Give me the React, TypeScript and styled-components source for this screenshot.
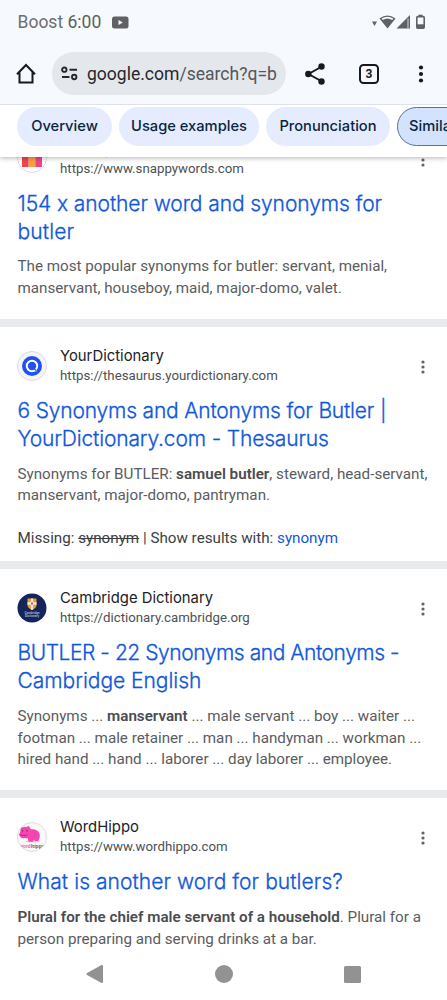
import React from 'react';
import styled, { createGlobalStyle } from 'styled-components';

const GlobalStyle = createGlobalStyle`
  * { box-sizing: border-box; }
  body { margin: 0; background: #fff; font-family: Roboto, "Liberation Sans", sans-serif; }
`;

const display = 'Inter, "Liberation Sans", sans-serif';

const Screen = styled.div`
  display: flex;
  flex-direction: column;
  width: 447px;
  height: 1000px;
  overflow: hidden;
  background: #fff;
`;

const StatusBar = styled.div`
  display: flex;
  align-items: center;
  justify-content: space-between;
  flex: none;
  height: 44px;
  padding: 0 21px 0 17.5px;
  background: #f6f9fe;
`;

const Clock = styled.div`
  display: flex;
  align-items: center;
  gap: 11px;
  color: #6d6f72;
  font-size: 17.5px;
  line-height: 22px;
`;

const Time = styled.span`
  color: #5d5f62;
`;

const Toolbar = styled.div`
  position: relative;
  z-index: 2;
  display: flex;
  align-items: center;
  flex: none;
  height: 61px;
  padding: 0 0 1px 16px;
  background: #f6f9fe;
  border-bottom: 1px solid #dfe2e7;
`;

const AddressBar = styled.div`
  display: flex;
  align-items: center;
  gap: 9px;
  width: 234px;
  height: 43px;
  margin: 0 19px 0 16px;
  padding-left: 9px;
  border-radius: 22px;
  background: #e4e7eb;
  color: #53565a;
  font-size: 17.54px;
  line-height: 24px;
  white-space: nowrap;
`;

const Domain = styled.span`
  color: #25282b;
`;

const Tools = styled.div`
  display: flex;
  align-items: center;
  gap: 33px;
`;

const TabCount = styled.div`
  width: 20px;
  height: 20px;
  margin-right: 3px;
  border: 2px solid #17191c;
  border-radius: 4.5px;
  color: #17191c;
  font-size: 12px;
  font-weight: 700;
  line-height: 16px;
  text-align: center;
`;

const ChipBar = styled.nav`
  position: relative;
  z-index: 1;
  flex: none;
  height: 52px;
  background: #fff;
  box-shadow: 0 1px 5px rgba(0, 0, 0, 0.3);
`;

const ChipScroller = styled.div`
  display: flex;
  gap: 7px;
  height: 52px;
  padding: 2px 0 0 17px;
  overflow: hidden;
`;

const Chip = styled.div<{ $width: number; $selected?: boolean }>`
  flex: none;
  width: ${p => p.$width}px;
  height: 39px;
  padding-left: ${p => (p.$selected ? '11px' : '0')};
  border: 1px solid ${p => (p.$selected ? '#5b7391' : '#e6ecff')};
  border-radius: 20px;
  background: ${p => (p.$selected ? '#d3e3fd' : '#e6ecff')};
  color: #0a2540;
  font: 500 14.7px/37px ${display};
  text-align: ${p => (p.$selected ? 'left' : 'center')};
  white-space: nowrap;
`;

const Viewport = styled.main`
  flex: 1;
  min-height: 0;
  overflow: hidden;
`;

const Results = styled.div`
  margin-top: -37.2px;
`;

const Result = styled.article`
  padding: 19px 17.5px 19.4px;
  border-bottom: 8px solid #e8eaed;
  &:last-child { border-bottom: 0; }
`;

const Source = styled.header`
  display: flex;
  align-items: center;
  height: 39px;
`;

const Favicon = styled.svg`
  flex: none;
  width: 30px;
  height: 30px;
  margin: 0 13px 0 -0.5px;
`;

const SourceText = styled.div`
  flex: 1;
`;

const SiteName = styled.div`
  color: #202124;
  font: 400 14.85px/20px ${display};
`;

const SiteUrl = styled.div`
  color: #4d5156;
  font-size: 13.28px;
  line-height: 19px;
`;

const MenuButton = styled.div`
  display: flex;
  margin: 3px 0.5px 0 0;
`;

const Title = styled.h3`
  margin: 12px 0 10.5px;
  color: #0f57da;
  font: 300 21px/28px ${display};
  -webkit-text-stroke: 0.3px #0f57da;
`;

const TitleLine = styled.span<{ $track: number }>`
  display: block;
  letter-spacing: ${p => p.$track}px;
  white-space: nowrap;
`;

const Snippet = styled.p`
  margin: 0;
  color: #5a5c60;
  font-size: 15.2px;
  line-height: 21.7px;
  white-space: nowrap;
  b { font-weight: 600; color: #4a4c50; }
`;

const Missing = styled(Snippet)`
  margin: 21.2px 0 -8px;
  color: #3c4043;
`;

const Link = styled.a`
  color: #0f57da;
`;

const NavBar = styled.footer`
  display: flex;
  align-items: center;
  justify-content: space-between;
  flex: none;
  height: 52px;
  padding: 0 86px;
  background: #fff;
`;

const Kebab = ({ r = 1.6, gap = 5, color = '#5f6368' }: { r?: number; gap?: number; color?: string }) => (
  <svg width="12" height="20" viewBox="0 0 12 20" fill={color}>
    {[10 - gap, 10, 10 + gap].map(y => <circle key={y} cx="6" cy={y} r={r} />)}
  </svg>
);

const SnappyIcon = () => (
  <Favicon viewBox="0 0 30 30">
    <circle cx="15" cy="15" r="14.5" fill="#fff" stroke="#dadce0" />
    <path d="M5 5h6.700v19H5z" fill="#ee4650" />
    <path d="M11.700 5h6.600v19h-6.600z" fill="#f9a13d" />
    <path d="M18.300 5H25v19h-6.700z" fill="#ec4489" />
  </Favicon>
);

const YourDictionaryIcon = () => (
  <Favicon viewBox="0 0 30 30">
    <circle cx="15" cy="15" r="14.5" fill="#f4f5f8" stroke="#dadce0" />
    <circle cx="15" cy="15" r="10" fill="#2152ef" />
    <circle cx="15" cy="15" r="5.2" fill="none" stroke="#fff" strokeWidth="2" />
    <path d="M16 20.300h3.800l-1.200-2z" fill="#fff" />
    <path d="M17 17.500l2.200 2.200" stroke="#2152ef" strokeWidth="1.200" />
  </Favicon>
);

const MicroText = styled.text`
  font: 700 4px "Liberation Sans", sans-serif;
  text-anchor: middle;
`;

const CambridgeIcon = () => (
  <Favicon viewBox="0 0 30 30">
    <circle cx="15" cy="15" r="14.5" fill="#142659" />
    <path d="M10.500 5.500h9v6.800c0 2.300-2 3.600-4.500 4.500-2.500-.9-4.500-2.200-4.500-4.500z" fill="#e99a35" />
    <path d="M15 5.500v11.300M10.500 10.500h9" stroke="#fbe9dc" strokeWidth="2.300" />
    <path d="M14 9.500h2v2h-2z" fill="#d0523f" />
    <MicroText x="15" y="20.500" fill="#b9c2da" textLength="15" lengthAdjust="spacingAndGlyphs">Cambridge</MicroText>
    <MicroText x="15" y="23.800" fill="#b9c2da" textLength="14" lengthAdjust="spacingAndGlyphs">Dictionary</MicroText>
  </Favicon>
);

const HippoText = styled(MicroText)`
  font-size: 5.5px;
`;

const HippoIcon = () => (
  <Favicon viewBox="0 0 30 30">
    <defs><clipPath id="hippoClip"><circle cx="15" cy="15" r="14" /></clipPath></defs>
    <circle cx="15" cy="15" r="14.5" fill="#fbf9f8" stroke="#dadce0" />
    <g clipPath="url(#hippoClip)">
      <ellipse cx="15.500" cy="19.300" rx="7" ry="1.200" fill="#d8c9cf" />
      <path d="M3.500 5.500q.8-1.800 2-.2 2.500-1 4.500-.2 1.500-2.200 2.500 0 .6 1.600 1.500 2.200c5-.6 8.800 2.200 8.800 6.200 0 2.500-.8 3.500-1.500 5.500h-3.500l-.8-1.500-1.200 2.200h-4l-1.300-3.700c-3 .6-7.300.5-8-2.300-.5-2.300.8-3.200.9-4.700z" fill="#f545b2" />
      <path d="M2.500 12.500q4 2 8 .3" stroke="#c92789" strokeWidth="1.200" fill="none" />
      <circle cx="5.500" cy="8.800" r=".8" fill="#8d2463" />
      <circle cx="10" cy="8.800" r=".8" fill="#8d2463" />
      <HippoText x="8" y="25.500" fill="#e94fa8" textLength="11" lengthAdjust="spacingAndGlyphs">word</HippoText>
      <HippoText x="21" y="25.500" fill="#80502e" textLength="14" lengthAdjust="spacingAndGlyphs">hippo</HippoText>
    </g>
  </Favicon>
);

type ResultProps = {
  icon: React.ReactNode;
  name: string;
  url: string;
  title: [string, number][];
  children: React.ReactNode;
};

const SearchResult = ({ icon, name, url, title, children }: ResultProps) => (
  <Result>
    <Source>
      {icon}
      <SourceText>
        <SiteName>{name}</SiteName>
        <SiteUrl>{url}</SiteUrl>
      </SourceText>
      <MenuButton><Kebab /></MenuButton>
    </Source>
    <Title>
      {title.map(([line, track]) => <TitleLine key={line} $track={track}>{line}</TitleLine>)}
    </Title>
    {children}
  </Result>
);

export default function App() {
  return (
    <Screen>
      <GlobalStyle />
      <StatusBar>
        <Clock>
          <span>Boost <Time>6:00</Time></span>
          <svg width="17" height="13" viewBox="0 0 17 13">
            <rect y=".5" width="16.500" height="12" rx="2.500" fill="#5f6164" />
            <path d="M6.500 4v5l4.300-2.500z" fill="#f6f9fe" />
          </svg>
        </Clock>
        <svg width="54" height="16" viewBox="0 0 54 16" fill="#5f6164">
          <path d="M0 7.500h5L2.500 12z" />
          <path d="M7.500 4.500Q15.500-1.500 23.500 4.500L15.500 14.500z" />
          <path d="M9.700 4.600Q15.500.9 21.300 4.600L20.300 5.900Q15.500 2.900 10.700 5.900z" fill="#f6f9fe" />
          <path d="M38 1v13.500H24.500z" />
          <path d="M36 4.500v10" stroke="#d7dadd" strokeWidth="1" />
          <path d="M46.500.7h4v1.700h-4z" />
          <rect x="44.800" y="2.600" width="7.400" height="11.600" rx="1" fill="none" stroke="#5f6164" strokeWidth="1.600" />
          <path d="M45 10.300h7v4h-7z" />
        </svg>
      </StatusBar>
      <Toolbar>
        <svg width="20" height="21" viewBox="0 0 20 21" fill="none" stroke="#17191c" strokeWidth="2">
          <path d="M1 11.200L10 2l9 9.200M3.500 9.500v10h13v-10" />
        </svg>
        <AddressBar>
          <svg width="17" height="15" viewBox="0 0 17 15" fill="none" stroke="#25282b" strokeWidth="1.900">
            <circle cx="3.300" cy="3.700" r="2.200" />
            <path d="M8.500 3.700H16M1 11h7.500" />
            <circle cx="13.200" cy="11" r="2.200" />
          </svg>
          <span><Domain>google.com</Domain>/search?q=b</span>
        </AddressBar>
        <Tools>
          <svg width="21" height="22" viewBox="0 0 21 22" fill="#17191c">
            <path d="M17 3.500L3.500 11 17 18.500" fill="none" stroke="#17191c" strokeWidth="1.900" />
            <circle cx="3.300" cy="11" r="3.200" />
            <circle cx="16.500" cy="3.500" r="3.200" />
            <circle cx="16.500" cy="18.500" r="3.200" />
          </svg>
          <TabCount>3</TabCount>
          <Kebab r={2.1} gap={6.5} color="#17191c" />
        </Tools>
      </Toolbar>
      <ChipBar>
        <ChipScroller>
          <Chip $width={95}>Overview</Chip>
          <Chip $width={140}>Usage examples</Chip>
          <Chip $width={124}>Pronunciation</Chip>
          <Chip $width={130} $selected>Similar words</Chip>
        </ChipScroller>
      </ChipBar>
      <Viewport>
        <Results>
          <SearchResult
            icon={<SnappyIcon />}
            name="SnappyWords"
            url="https://www.snappywords.com"
            title={[['154 x another word and synonyms for', -0.09], ['butler', 0.15]]}
          >
            <Snippet>
              The most popular synonyms for butler: servant, menial,<br />
              manservant, houseboy, maid, major-domo, valet.
            </Snippet>
          </SearchResult>
          <SearchResult
            icon={<YourDictionaryIcon />}
            name="YourDictionary"
            url="https://thesaurus.yourdictionary.com"
            title={[['6 Synonyms and Antonyms for Butler |', -0.18], ['YourDictionary.com - Thesaurus', -0.16]]}
          >
            <Snippet>
              Synonyms for BUTLER: <b>samuel butler</b>, steward, head-servant,<br />
              manservant, major-domo, pantryman.
            </Snippet>
            <Missing>
              Missing: <s>synonym</s> | Show results with: <Link>synonym</Link>
            </Missing>
          </SearchResult>
          <SearchResult
            icon={<CambridgeIcon />}
            name="Cambridge Dictionary"
            url="https://dictionary.cambridge.org"
            title={[['BUTLER - 22 Synonyms and Antonyms -', -0.45], ['Cambridge English', -0.03]]}
          >
            <Snippet>
              Synonyms ... <b>manservant</b> ... male servant ... boy ... waiter ...<br />
              footman ... male retainer ... man ... handyman ... workman ...<br />
              hired hand ... hand ... laborer ... day laborer ... employee.
            </Snippet>
          </SearchResult>
          <SearchResult
            icon={<HippoIcon />}
            name="WordHippo"
            url="https://www.wordhippo.com"
            title={[['What is another word for butlers?', 0.06]]}
          >
            <Snippet>
              <b>Plural for the chief male servant of a household</b>. Plural for a<br />
              person preparing and serving drinks at a bar.
            </Snippet>
          </SearchResult>
        </Results>
      </Viewport>
      <NavBar>
        <svg width="17" height="18" viewBox="0 0 17 18"><path d="M16 1v16L1.500 9z" fill="#929292" stroke="#929292" strokeWidth="2" strokeLinejoin="round" /></svg>
        <svg width="18" height="18" viewBox="0 0 18 18"><circle cx="9" cy="9" r="9" fill="#929292" /></svg>
        <svg width="17" height="17" viewBox="0 0 17 17"><rect width="17" height="17" rx="1.500" fill="#929292" /></svg>
      </NavBar>
    </Screen>
  );
}
